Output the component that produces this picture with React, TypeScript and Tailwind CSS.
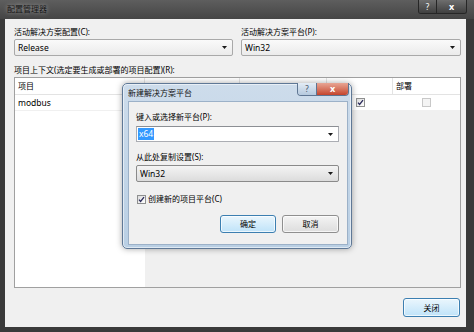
const Arrow = () => (
  <svg width="5" height="3" viewBox="0 0 5 3" className="shrink-0">
    <path d="M0 0h5L2.5 3z" fill="#1a1a1a" />
  </svg>
);

const Tick = () => (
  <svg width="7" height="7" viewBox="0 0 7 7">
    <path d="M1 3.6l1.6 1.8L6 1.2" fill="none" stroke="#2a2a5a" strokeWidth="1.3" />
  </svg>
);

function Combo({ value, variant }: { value: string; variant: "flat" | "button" }) {
  return (
    <div
      className={
        variant === "button"
          ? "h-[17px] flex items-center justify-between pl-[3px] pr-[5px] border border-[#8a8a8a] rounded-[2px] bg-gradient-to-b from-[#f4f4f4] to-[#dcdcdc]"
          : "h-[17px] flex items-center justify-between pl-[3px] pr-[5px] border border-[#a9a9a9] rounded-[2px] bg-gradient-to-b from-[#fafafa] to-[#ebebeb]"
      }
    >
      <span className="text-[8.5px] leading-[12px]">{value}</span>
      <Arrow />
    </div>
  );
}

export default function App() {
  return (
    <div className="w-[474px] h-[332px] relative overflow-hidden flex flex-col bg-[#3a3a3a] font-['Noto_Sans','Noto_Sans_CJK_SC',sans-serif] text-black">
      {/* outer title bar */}
      <div className="h-[19px] flex items-start justify-between bg-gradient-to-b from-[#5e5e5e] to-[#454545]">
        <span className="pl-[7px] pt-[4px] text-[8px] leading-[10px] text-[#151515] [text-shadow:0_0_4px_rgba(255,255,255,0.55)]">
          配置管理器
        </span>
        <div className="flex mr-[7px] h-[14px] border border-t-0 border-[#262626] rounded-b-[3px] overflow-hidden">
          <div className="w-[18px] flex items-center justify-center bg-gradient-to-b from-[#6e6e6e] to-[#404040] border-r border-[#262626] text-[8px] text-white">?</div>
          <div className="w-[29px] flex items-center justify-center bg-gradient-to-b from-[#6e6e6e] to-[#404040] text-[9px] leading-[10px] font-bold text-white">x</div>
        </div>
      </div>

      {/* client area */}
      <div className="ml-[5px] w-[461px] h-[308px] bg-[#f0f0f0] flex flex-col pl-[9px] pr-[5px]">
        <div className="mt-[7px] flex gap-[8px]">
          <div className="w-[219px] flex flex-col gap-[1px]">
            <span className="h-[12px] text-[8px] leading-[12px]">活动解决方案配置(C):</span>
            <Combo value="Release" variant="flat" />
          </div>
          <div className="w-[220px] flex flex-col gap-[1px]">
            <span className="h-[12px] text-[8px] leading-[12px]">活动解决方案平台(P):</span>
            <Combo value="Win32" variant="flat" />
          </div>
        </div>

        <span className="mt-[8px] h-[12px] text-[8px] leading-[12px]">项目上下文(选定要生成或部署的项目配置)(R):</span>

        <div className="mt-[1px] h-[211px] border border-[#a0a0a0] bg-[linear-gradient(to_right,#ffffff_130px,#f0f0f0_130px)] flex flex-col">
          <div className="h-[17px] flex bg-white border-b border-[#e3e3e3] text-[8px] leading-[12px]">
            <div className="w-[130px] pl-[3px] flex items-center border-r border-[#e3e3e3]">项目</div>
            <div className="w-[95px] border-r border-[#e3e3e3]" />
            <div className="w-[87px] border-r border-[#e3e3e3]" />
            <div className="w-[66px] border-r border-[#e3e3e3]" />
            <div className="flex-1 pl-[3px] flex items-center">部署</div>
          </div>
          <div className="h-[16px] flex bg-white border-b border-[#f0f0f0] text-[8.5px] leading-[12px]">
            <div className="w-[130px] pl-[3px] flex items-center">modbus</div>
            <div className="w-[95px]" />
            <div className="w-[87px]" />
            <div className="w-[66px] flex items-center justify-center">
              <span className="w-[9px] h-[9px] border border-[#8e8f8f] bg-gradient-to-br from-[#dcdcdc] to-white flex items-center justify-center">
                <Tick />
              </span>
            </div>
            <div className="flex-1 flex items-center justify-center">
              <span className="w-[9px] h-[9px] border border-[#c8c8c8] bg-[#f4f4f4]" />
            </div>
          </div>
        </div>

        <div className="mt-[10px] self-end mr-[1px] w-[57px] h-[19px] flex items-center justify-center border border-[#3c7fb1] rounded-[3px] bg-gradient-to-b from-[#eaf6fd] to-[#bfe3f9] shadow-[inset_0_0_0_1px_rgba(255,255,255,0.7)] text-[8px]">
          关闭
        </div>
      </div>

      {/* modal dialog */}
      <div className="absolute left-[122px] top-[83px] w-[230px] h-[166px] border border-[#5f7896] rounded-[5px] bg-gradient-to-b from-[#cddceb] to-[#b9cfe4] shadow-[inset_0_0_0_1px_rgba(255,255,255,0.55),0_0_6px_rgba(0,0,0,0.35)] flex flex-col">
        <div className="h-[17px] pl-[5px] flex items-center text-[8px] leading-[10px] text-[#111]">新建解决方案平台</div>
        <div className="absolute top-[-1px] right-[2px] flex h-[13px] border border-t-0 border-[#5e7592] rounded-b-[4px] overflow-hidden">
          <div className="w-[19px] flex items-center justify-center bg-gradient-to-b from-[#e3ecf5] to-[#b5c9de] border-r border-[#5e7592] text-[8px] leading-[10px] text-[#3d4f66]">?</div>
          <div className="w-[31px] flex items-center justify-center bg-gradient-to-b from-[#e7a594] to-[#c4432c] text-[9px] leading-[10px] font-bold text-white">x</div>
        </div>

        <div className="ml-[5px] mr-[3px] h-[144px] border border-[#9cb1c8] bg-[#f0f0f0] flex flex-col pl-[7px] pt-[9px]">
          <span className="h-[12px] text-[8px] leading-[12px]">键入或选择新平台(P):</span>
          <div className="mt-[3px] w-[203px] h-[16px] flex items-center justify-between pr-[5px] bg-white border border-[#abadb3] border-t-[#8c8f94]">
            <span className="ml-[1px] px-[1px] bg-[#3399ff] text-white text-[8.5px] leading-[12px]">x64</span>
            <Arrow />
          </div>

          <span className="mt-[9px] h-[12px] text-[8px] leading-[12px]">从此处复制设置(S):</span>
          <div className="mt-[2px] w-[203px]">
            <Combo value="Win32" variant="button" />
          </div>

          <div className="mt-[11px] h-[12px] flex items-center gap-[2px] pl-[1px]">
            <span className="w-[9px] h-[9px] border border-[#8e8f8f] bg-gradient-to-br from-[#dcdcdc] to-white flex items-center justify-center">
              <Tick />
            </span>
            <span className="text-[8px] leading-[12px]">创建新的项目平台(C)</span>
          </div>

          <div className="mt-[10px] w-[203px] flex justify-end gap-[6px]">
            <div className="w-[56px] h-[18px] flex items-center justify-center border border-[#3c7fb1] rounded-[3px] bg-gradient-to-b from-[#eaf6fd] to-[#bfe3f9] shadow-[inset_0_0_0_1px_rgba(255,255,255,0.7)] text-[8px]">
              确定
            </div>
            <div className="w-[57px] h-[18px] flex items-center justify-center border border-[#8f8f8f] rounded-[3px] bg-gradient-to-b from-[#f4f4f4] to-[#dddddd] shadow-[inset_0_0_0_1px_rgba(255,255,255,0.7)] text-[8px]">
              取消
            </div>
          </div>
        </div>
      </div>
    </div>
  );
}
